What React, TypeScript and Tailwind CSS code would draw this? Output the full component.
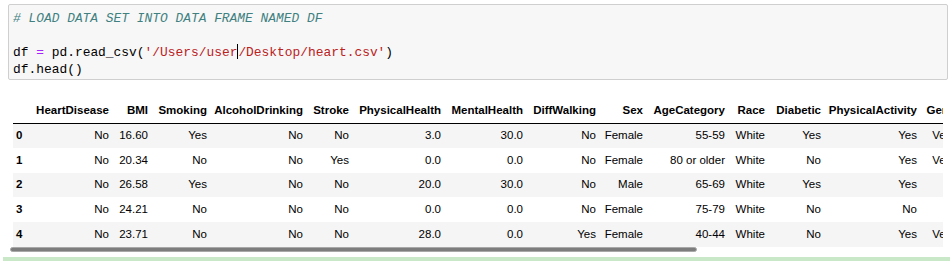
import React from 'react';

type Col = { name: string; w: string };

const columns: Col[] = [
  { name: 'HeartDisease', w: 'w-[85px]' },
  { name: 'BMI', w: 'w-[39px]' },
  { name: 'Smoking', w: 'w-[59px]' },
  { name: 'AlcoholDrinking', w: 'w-[96px]' },
  { name: 'Stroke', w: 'w-[46px]' },
  { name: 'PhysicalHealth', w: 'w-[92px]' },
  { name: 'MentalHealth', w: 'w-[82px]' },
  { name: 'DiffWalking', w: 'w-[73px]' },
  { name: 'Sex', w: 'w-[47px]' },
  { name: 'AgeCategory', w: 'w-[82px]' },
  { name: 'Race', w: 'w-[40px]' },
  { name: 'Diabetic', w: 'w-[56px]' },
  { name: 'PhysicalActivity', w: 'w-[96px]' },
  { name: 'GenHealth', w: 'w-[67px]' },
  { name: 'SleepTime', w: 'w-[70px]' },
  { name: 'Asthma', w: 'w-[52px]' },
  { name: 'KidneyDisease', w: 'w-[92px]' },
  { name: 'SkinCancer', w: 'w-[76px]' },
];

const rows: string[][] = [
  ['No', '16.60', 'Yes', 'No', 'No', '3.0', '30.0', 'No', 'Female', '55-59', 'White', 'Yes', 'Yes', 'Very good', '5.0', 'Yes', 'No', 'Yes'],
  ['No', '20.34', 'No', 'No', 'Yes', '0.0', '0.0', 'No', 'Female', '80 or older', 'White', 'No', 'Yes', 'Very good', '7.0', 'No', 'No', 'No'],
  ['No', '26.58', 'Yes', 'No', 'No', '20.0', '30.0', 'No', 'Male', '65-69', 'White', 'Yes', 'Yes', 'Fair', '8.0', 'Yes', 'No', 'No'],
  ['No', '24.21', 'No', 'No', 'No', '0.0', '0.0', 'No', 'Female', '75-79', 'White', 'No', 'No', 'Good', '6.0', 'No', 'No', 'Yes'],
  ['No', '23.71', 'No', 'No', 'No', '28.0', '0.0', 'Yes', 'Female', '40-44', 'White', 'No', 'Yes', 'Very good', '8.0', 'No', 'No', 'No'],
];

const CodeCell: React.FC = () => (
  <div className="ml-[8px] mr-[2px] mt-[4px] border border-[#cfcfcf] rounded-[2px] bg-[#f7f7f7] pl-[4px] pt-[6px] pb-[1px]">
    <pre
      className="text-[12.9px] leading-[16.5px] text-black"
      style={{ fontFamily: '"Liberation Mono", "DejaVu Sans Mono", monospace' }}
    >
      <div className="italic text-[#408080]"># LOAD DATA SET INTO DATA FRAME NAMED DF</div>
      <div>&nbsp;</div>
      <div>
        df <span className="text-[#aa22ff]">=</span> pd.read_csv(
        <span className="text-[#ba2121]">
          '/Users/user
          <span className="inline-block w-0 h-[15px] align-[-3px] border-l border-black" />
          /Desktop/heart.csv'
        </span>
        )
      </div>
      <div>df.head()</div>
    </pre>
  </div>
);

const DataFrame: React.FC = () => (
  <div className="relative ml-[8px] w-[935px] mt-[18px] overflow-hidden pl-[5px] h-[156px]">
    <table
      className="table-fixed w-[1267px] border-collapse text-[11.5px] text-black"
      style={{ fontFamily: '"Liberation Sans", Arial, sans-serif' }}
    >
      <colgroup>
        <col className="w-[17px]" />
        {columns.map(c => (
          <col key={c.name} className={c.w} />
        ))}
      </colgroup>
      <thead>
        <tr className="h-[25px] border-b border-black">
          <th className="pl-[3px]" />
          {columns.map(c => (
            <th key={c.name} className="text-right font-bold pr-[6px] whitespace-nowrap">
              {c.name}
            </th>
          ))}
        </tr>
      </thead>
      <tbody>
        {rows.map((r, i) => (
          <tr key={i} className={`h-[24.75px] ${i % 2 === 0 ? 'bg-[#f5f5f5]' : 'bg-white'}`}>
            <th className="text-left font-bold pl-[3px]">{i}</th>
            {r.map((v, j) => (
              <td key={j} className="text-right pr-[6px] whitespace-nowrap">
                {v}
              </td>
            ))}
          </tr>
        ))}
      </tbody>
    </table>
    {/* overlay scrollbar */}
    <div className="absolute left-[2px] top-[149px] w-[687px] h-[5px] rounded-full bg-[#7d7d7d] border border-[#a8a8a8]" />
  </div>
);

export default function App() {
  return (
    <div className="w-[950px] h-[261px] bg-white overflow-hidden">
      <CodeCell />
      <DataFrame />
      <div className="ml-[3px] mt-[3px] h-[4px] bg-[#c8e8c8]" />
    </div>
  );
}
